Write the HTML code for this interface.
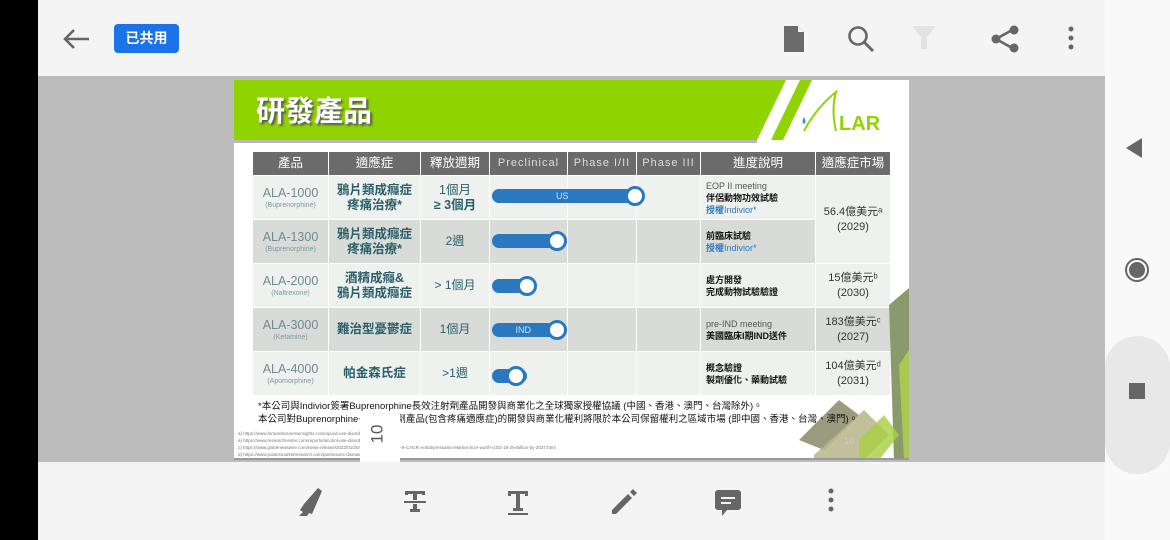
<!DOCTYPE html>
<html><head><meta charset="utf-8"><style>
*{margin:0;padding:0;box-sizing:border-box}
body{width:1170px;height:540px;overflow:hidden;background:#000;font-family:"Liberation Sans","Noto Sans CJK TC",sans-serif;position:relative}
.abs{position:absolute}
.top{left:38px;top:0;width:1067px;height:76px;background:#f4f4f4}
.gray{left:38px;top:76px;width:1067px;height:386px;background:#bcbcbc}
.bot{left:38px;top:462px;width:1067px;height:78px;background:#f4f4f4}
.nav{left:1105px;top:0;width:65px;height:540px;background:#f9f9f9}
.slide{left:234px;top:80px;width:675px;height:380px;background:#fff;overflow:hidden}
table{position:absolute;left:18px;top:71px;border-collapse:collapse;table-layout:fixed;width:638px}
td,th{border:1px solid #fff;text-align:center;vertical-align:middle;font-size:12px;color:#2a5f6a;line-height:15px}
th{background:#6b6b6b;color:#fff;font-weight:normal;height:24px;font-size:12.5px}
th.ph{color:#ddd;font-size:11px;letter-spacing:1px}
tr.a td{background:#eef1ee}
tr.b td{background:#d9dbd8}
td{height:44px}
.code{color:#6e8c92;font-size:12.5px}
.code small{display:block;font-size:7px;color:#7a9aa0;line-height:9px}
.ind{font-weight:bold;font-size:12.5px;color:#2a5f6a}
.desc{text-align:left;padding-left:5px;font-size:9px;color:#111;font-weight:bold;line-height:12px}
.desc .l{font-weight:normal;color:#555;font-size:9px}
.bar{position:absolute;height:14px;background:#2a79c0;border-radius:7px;color:#cfe2f3;font-size:9px;text-align:center;line-height:14px}
.knob{position:absolute;width:20px;height:20px;border-radius:50%;background:#fff;border:3px solid #2a79c0}
.ico{fill:#6b6b6b}
</style></head><body>
<div class="abs top"></div>
<div class="abs gray"></div>
<div class="abs bot"></div>
<div class="abs nav"></div>
<div class="abs" style="left:1105px;top:336px;width:65px;height:138px;background:#e8e8e8;border-radius:32px"></div>

<svg class="abs" style="left:60px;top:26px" width="32" height="26" viewBox="0 0 32 26"><path d="M29 13H5M14 4L5 13l9 9" stroke="#666" stroke-width="2.6" fill="none"/></svg>
<div class="abs" style="left:114px;top:24px;width:65px;height:29px;background:#1a73e8;border-radius:4px;color:#fff;font-size:14px;font-weight:bold;text-align:center;line-height:29px">已共用</div>
<svg class="abs" style="left:784px;top:26px" width="22" height="26"><path class="ico" d="M0 0h14l6 6v20H0z"/><path d="M14 0v6h6" fill="#f4f4f4"/></svg>
<svg class="abs" style="left:847px;top:25px" width="30" height="28"><circle cx="11" cy="11" r="8.5" stroke="#666" stroke-width="2.6" fill="none"/><path d="M17 17l9 9" stroke="#666" stroke-width="3"/></svg>
<svg class="abs" style="left:912px;top:26px" width="26" height="26"><path d="M0 0h24l-9 11v12h-6V11z" fill="#e2e2e2"/></svg>
<svg class="abs" style="left:990px;top:25px" width="30" height="28"><path d="M24 4L6 14l18 10" stroke="#666" stroke-width="2.6" fill="none"/><circle cx="24" cy="5" r="4.5" fill="#666"/><circle cx="24" cy="23" r="4.5" fill="#666"/><circle cx="6" cy="14" r="4.5" fill="#666"/></svg>
<svg class="abs" style="left:1066px;top:26px" width="10" height="26"><circle cx="5" cy="3" r="2.5" fill="#666"/><circle cx="5" cy="12" r="2.5" fill="#666"/><circle cx="5" cy="21" r="2.5" fill="#666"/></svg>

<svg class="abs" style="left:1126px;top:138px" width="20" height="20"><path d="M16 0v20L0 10z" fill="#666"/></svg>
<svg class="abs" style="left:1124px;top:257px" width="26" height="26"><circle cx="13" cy="13" r="11" stroke="#666" stroke-width="2" fill="none"/><circle cx="13" cy="13" r="8" fill="#666"/></svg>
<div class="abs" style="left:1129px;top:383px;width:16px;height:16px;background:#666"></div>

<div class="abs slide">
  <svg class="abs" style="left:0;top:0" width="675" height="64"><path d="M0 0H552L523 60H0z" fill="#8fd400"/><path d="M566 0h12l-29 60h-12z" fill="#8fd400"/><path d="M0 60h523v3H0z" fill="#8a8a8a" opacity=".6"/></svg>
  <div class="abs" style="left:22px;top:10px;font-size:29px;font-weight:bold;color:#fff;text-shadow:2px 2px 2px #555;font-family:'Noto Sans CJK TC',sans-serif;line-height:38px">研發產品</div>
  <svg class="abs" style="left:560px;top:6px" width="110" height="50"><path d="M10 45Q22 22 42 6q-5 18 0 39" stroke="#8fd400" stroke-width="2" fill="none"/><path d="M10 31q-3 5 0 7q3-2 0-7z" fill="#2a9ad8"/><text x="45" y="44" font-size="20" font-weight="bold" fill="#8fd400" font-family="Liberation Sans">LAR</text></svg>
  <table>
    <colgroup><col style="width:76px"><col style="width:92px"><col style="width:69px"><col style="width:78px"><col style="width:69px"><col style="width:64px"><col style="width:115px"><col style="width:75px"></colgroup>
    <tr><th>產品</th><th>適應症</th><th>釋放週期</th><th class="ph">Preclinical</th><th class="ph">Phase I/II</th><th class="ph">Phase III</th><th>進度說明</th><th>適應症市場</th></tr>
    <tr class="a"><td class="code">ALA-1000<small>(Buprenorphine)</small></td><td class="ind">鴉片類成癮症<br>疼痛治療*</td><td class="ind" style="font-weight:normal">1個月<br><b>≥ 3個月</b></td><td></td><td></td><td></td><td class="desc"><span class="l">EOP II meeting</span><br>伴侶動物功效試驗<br><span style="color:#2a79c0">授權<span style="font-weight:normal">Indivior*</span></span></td><td rowspan="2" style="background:#eef1ee;color:#333;font-size:11px">56.4億美元ᵃ<br>(2029)</td></tr>
    <tr class="b"><td class="code">ALA-1300<small>(Buprenorphine)</small></td><td class="ind">鴉片類成癮症<br>疼痛治療*</td><td style="font-weight:normal">2週</td><td></td><td></td><td></td><td class="desc">前臨床試驗<br><span style="color:#2a79c0">授權<span style="font-weight:normal">Indivior*</span></span></td></tr>
    <tr class="a"><td class="code">ALA-2000<small>(Naltrexone)</small></td><td class="ind">酒精成癮&amp;<br>鴉片類成癮症</td><td>&gt; 1個月</td><td></td><td></td><td></td><td class="desc">處方開發<br>完成動物試驗驗證</td><td style="color:#333;font-size:11px">15億美元ᵇ<br>(2030)</td></tr>
    <tr class="b"><td class="code">ALA-3000<small>(Ketamine)</small></td><td class="ind">難治型憂鬱症</td><td>1個月</td><td></td><td></td><td></td><td class="desc"><span class="l">pre-IND meeting</span><br>美國臨床I期IND送件</td><td style="color:#333;font-size:11px">183億美元ᶜ<br>(2027)</td></tr>
    <tr class="a"><td class="code">ALA-4000<small>(Apomorphine)</small></td><td class="ind">帕金森氏症</td><td>&gt;1週</td><td></td><td></td><td></td><td class="desc">概念驗證<br>製劑優化、藥動試驗</td><td style="color:#333;font-size:11px">104億美元ᵈ<br>(2031)</td></tr>
  </table>
  <div class="bar" style="left:258px;top:109px;width:148px">US&nbsp;&nbsp;&nbsp;</div><div class="knob" style="left:391px;top:106px"></div>
  <div class="bar" style="left:258px;top:154px;width:70px"></div><div class="knob" style="left:313px;top:151px"></div>
  <div class="bar" style="left:258px;top:199px;width:40px"></div><div class="knob" style="left:283px;top:196px"></div>
  <div class="bar" style="left:258px;top:243px;width:70px">IND&nbsp;&nbsp;&nbsp;</div><div class="knob" style="left:313px;top:240px"></div>
  <div class="bar" style="left:258px;top:289px;width:35px"></div><div class="knob" style="left:272px;top:286px"></div>
  <svg class="abs" style="left:550px;top:200px" width="125" height="180"><path d="M125 8L105 25 110 180h15z" fill="#8a9a6a"/><path d="M125 70l-10 15 5 95h5z" fill="#a8c850"/><path d="M15 160l40-40 20 15-35 35z" fill="#8a8a6a" opacity=".85"/><path d="M30 175l50-45 25 25-25 25H30z" fill="#b8b48a" opacity=".85"/><path d="M75 160l25-25 15 20-20 25H75z" fill="#a8d040" opacity=".8"/></svg>
  <div class="abs" style="left:24px;top:320px;font-size:9.5px;color:#111;line-height:13px;white-space:nowrap">*本公司與Indivior簽署Buprenorphine長效注射劑產品開發與商業化之全球獨家授權協議 (中國、香港、澳門、台灣除外)。<br>本公司對Buprenorphine長效注射劑產品(包含疼痛適應症)的開發與商業化權利將限於本公司保留權利之區域市場 (即中國、香港、台灣、澳門)。</div>
  <div class="abs" style="left:4px;top:350px;font-size:4.5px;color:#777;line-height:7px;white-space:nowrap">a) https://www.fortunebusinessinsights.com/opioid-use-disorder-market-102674<br>a) https://www.researchnester.com/reports/alcohol-use-disorder-market<br>c) https://www.globenewswire.com/news-release/2022/01/20/2355277/0/en/Win-2-9-CAGR-Antidepressants-Market-Size-worth-USD-18-29-Billion-by-2027.html<br>d) https://www.polarismarketresearch.com/parkinsons-disease-drug-market</div>
  <div class="abs" style="left:610px;top:356px;font-size:9px;color:#ccc">10</div>
  <div class="abs" style="left:0;top:378px;width:675px;height:2px;background:#999"></div>
</div>
<div class="abs" style="left:360px;top:414px;width:40px;height:48px;background:#fff"></div>
<div class="abs" style="left:368px;top:424px;font-size:17px;color:#555;transform:rotate(-90deg);transform-origin:center">10</div>

<svg class="abs" style="left:296px;top:488px" width="30" height="28"><path d="M26 3l-4-3-14 16-4 6 3 2-4 4h8l2-3 3 1z" fill="#666"/></svg>
<svg class="abs" style="left:404px;top:490px" width="24" height="24"><path d="M1 1h20v4h-3V4h-5v6H9V4H4v1H1z M0 11h22v2H0z M9 14h4v5h3v3H6v-3h3z" fill="#666"/></svg>
<svg class="abs" style="left:506px;top:490px" width="26" height="26"><path d="M2 1h20v5h-3V4h-5v14h3v3H7v-3h3V4H5v2H2z M2 23h20v2H2z" fill="#666"/></svg>
<svg class="abs" style="left:610px;top:488px" width="28" height="28"><path d="M2 22v4h4L22 10l-4-4z M20 4l4 4 3-3-4-4z" fill="#666"/></svg>
<svg class="abs" style="left:715px;top:490px" width="26" height="28"><path d="M3 0h20a3 3 0 013 3v14a3 3 0 01-3 3H12l-5 6v-6H3a3 3 0 01-3-3V3a3 3 0 013-3z" fill="#666"/><path d="M6 7h14v2H6zM6 12h10v2H6z" fill="#f4f4f4"/></svg>
<svg class="abs" style="left:826px;top:488px" width="10" height="26"><circle cx="5" cy="3" r="2.5" fill="#666"/><circle cx="5" cy="12" r="2.5" fill="#666"/><circle cx="5" cy="21" r="2.5" fill="#666"/></svg>
</body></html>
